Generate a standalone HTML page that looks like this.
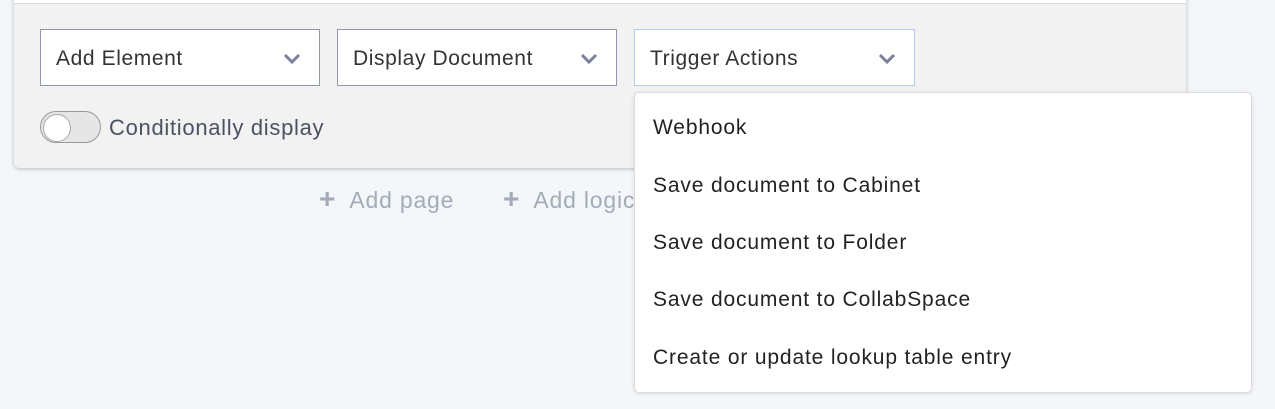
<!DOCTYPE html>
<html><head><style>
*{box-sizing:border-box;margin:0;padding:0}
body{width:1275px;height:409px;background:#f4f7fa;font-family:"Liberation Sans",sans-serif;position:relative;overflow:hidden}
.card{position:absolute;left:14px;top:-10px;width:1172px;height:178px;background:#f2f2f2;border-radius:0 0 5px 5px;box-shadow:0 1px 4px rgba(0,0,0,.25)}
.top{position:absolute;left:0;top:0;width:100%;height:14px;background:#fff;border-bottom:1px solid #dcdcdc}
.sel{position:absolute;top:29px;height:57px;background:#fff;border:1px solid #9096ad;font-size:21px;letter-spacing:.6px;color:#333;padding-left:15px;line-height:57px}
.sel svg{position:absolute;right:18px;top:23px}
.tog{position:absolute;left:40px;top:111px;width:61px;height:32px;border:1px solid #999;border-radius:16px;background:#e6e6e6}
.tog::after{content:"";position:absolute;left:2px;top:2px;width:26px;height:26px;border-radius:50%;background:#fff;border:1px solid #aaa}
.lbl{position:absolute;left:109px;top:115px;font-size:22px;letter-spacing:.7px;color:#4a5262}
.add{position:absolute;top:183px;font-size:23px;letter-spacing:.8px;color:#a3abb8}
.add b{font-size:28px;margin-right:14px;letter-spacing:0}
.menu{position:absolute;left:634px;top:92px;width:618px;height:301px;background:#fff;border:1px solid #dcdcdc;border-radius:5px;box-shadow:0 1px 4px rgba(0,0,0,.12)}
.menu div{position:absolute;left:18px;font-size:21px;letter-spacing:.85px;color:#222}
</style></head><body>
<div class="card"><div class="top"></div></div>
<div class="sel" style="left:40px;width:280px">Add Element<svg width="18" height="12"><path d="M2 2l7 7 7-7" stroke="#7b819a" stroke-width="3" fill="none"/></svg></div>
<div class="sel" style="left:337px;width:280px">Display Document<svg width="18" height="12"><path d="M2 2l7 7 7-7" stroke="#7b819a" stroke-width="3" fill="none"/></svg></div>
<div class="sel" style="left:634px;width:281px;border-color:#b6cbe3">Trigger Actions<svg width="18" height="12"><path d="M2 2l7 7 7-7" stroke="#7b819a" stroke-width="3" fill="none"/></svg></div>
<div class="tog"></div>
<div class="lbl">Conditionally display</div>
<div class="add" style="left:319px"><b>+</b>Add page</div>
<div class="add" style="left:503px"><b>+</b>Add logic</div>
<div class="menu">
<div style="top:23px">Webhook</div>
<div style="top:81px">Save document to Cabinet</div>
<div style="top:138px">Save document to Folder</div>
<div style="top:195px">Save document to CollabSpace</div>
<div style="top:253px">Create or update lookup table entry</div>
</div>
</body></html>
